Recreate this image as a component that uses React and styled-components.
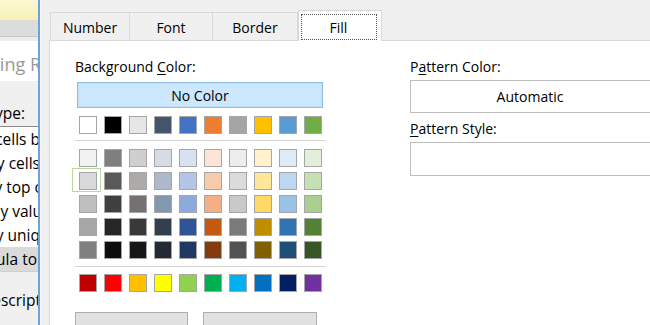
import React from "react";
import styled, { createGlobalStyle } from "styled-components";

const Global = createGlobalStyle`
  html, body { margin: 0; padding: 0; }
  body {
    width: 650px; height: 325px; overflow: hidden; background: #f0f0f0;
    font-family: "Open Sans", "Noto Sans", "Liberation Sans", sans-serif;
    font-size: 14px; color: #000;
  }
`;

const Page = styled.div`
  display: flex;
  height: 325px;
  width: 650px;
  overflow: hidden;
`;

/* ---------- background window strip ---------- */
const BackWindow = styled.div`
  width: 38px;
  flex: none;
  display: flex;
  flex-direction: column;
  background: #f0f0f0;
  overflow: hidden;
  & > * { flex-shrink: 0; }
`;
const YellowBar = styled.div`
  height: 20px;
  background: linear-gradient(#fcf8d2, #f7f0b8);
`;
const GrayBar = styled.div`
  height: 16px;
  background: #dcdcdc;
  border-bottom: 1px solid #c9c9c9;
`;
const LightBar = styled.div`
  height: 4px;
  background: #ececec;
`;
const Clip = styled.div`
  display: flex;
  flex-shrink: 0;
  justify-content: flex-end;
  align-items: center;
  white-space: nowrap;
  overflow: hidden;
  height: ${(p) => p.$h}px;
  background: ${(p) => p.$bg || "transparent"};
  color: ${(p) => p.$color || "#000"};
  font-size: ${(p) => p.$size || 15.5}px;
  & > span { margin-right: ${(p) => p.$cut || 0}px; }
`;
const ListBox = styled.div`
  display: flex;
  flex-direction: column;
  background: #fff;
  border-top: 1px solid #8a8a8a;
  border-bottom: 1px solid #cfcfcf;
`;
const WindowEdge = styled.div`
  width: 2px;
  flex: none;
  background: #6ea3d6;
`;

/* ---------- dialog ---------- */
const Dialog = styled.div`
  flex: none;
  width: 700px;
  display: flex;
  flex-direction: column;
  background: #f0f0f0;
  padding-left: 8px;
  border-left: 1px solid #f7f7f7;
`;
const TabStrip = styled.div`
  display: flex;
  flex: none;
  align-items: flex-end;
  height: 40px;
  padding-left: 1px;
`;
const Tab = styled.div`
  box-sizing: border-box;
  width: ${(p) => p.$w}px;
  height: ${(p) => (p.$active ? 31 : 28)}px;
  display: flex;
  align-items: center;
  justify-content: center;
  background: ${(p) => (p.$active ? "#fff" : "#f0f0f0")};
  border: 1px solid #d9d9d9;
  border-bottom: none;
  border-left: ${(p) => (p.$first || p.$active ? "1px solid #d9d9d9" : "none")};
  margin-bottom: ${(p) => (p.$active ? -1 : 0)}px;
  padding-top: ${(p) => (p.$active ? 0 : 1)}px;
  position: relative;
  z-index: ${(p) => (p.$active ? 2 : 1)};
`;
const FocusRect = styled.div`
  box-sizing: border-box;
  width: calc(100% - 6px);
  height: 26px;
  margin-right: 3px;
  margin-top: 2px;
  border: 1px dotted #555;
  display: flex;
  align-items: center;
  justify-content: center;
`;
const Panel = styled.div`
  flex: 1;
  min-height: 0;
  overflow: hidden;
  background: #fff;
  border-left: 1px solid #d9d9d9;
  border-top: 1px solid #d9d9d9;
  display: flex;
  align-items: flex-start;
  padding: 16px 0 0 25px;
  gap: 84px;
`;
const LeftCol = styled.div`
  width: 251px;
  flex: none;
  display: flex;
  flex-direction: column;
`;
const RightCol = styled.div`
  width: 260px;
  flex: none;
  display: flex;
  flex-direction: column;
`;
const Label = styled.div`
  height: 20px;
  line-height: 20px;
  margin-top: ${(p) => p.$mt || 0}px;
  white-space: nowrap;
  u { text-decoration-thickness: 1px; text-underline-offset: 2px; }
`;
const NoColorButton = styled.div`
  box-sizing: border-box;
  margin: 5px 3px 0 2px;
  height: 26px;
  background: #cce8ff;
  border: 1px solid #8fbfe8;
  box-shadow: inset 0 0 0 1px #c2def5;
  display: flex;
  align-items: center;
  justify-content: center;
`;
const SwatchRow = styled.div`
  display: flex;
  gap: 7px;
  padding-left: 4px;
  margin-top: ${(p) => p.$mt || 0}px;
`;
const Swatch = styled.div`
  box-sizing: border-box;
  width: 18px;
  height: 18px;
  background: ${(p) => p.$c};
  border: 1px solid #a6a6a6;
  position: relative;
  ${(p) =>
    p.$selected &&
    `&::after {
      content: "";
      position: absolute;
      left: -8px; top: -5px; right: -5px; bottom: -3px;
      border: 1px solid #b9d89f;
    }`}
`;
const ThemeGrid = styled.div`
  display: flex;
  flex-direction: column;
  gap: 5px;
  margin-top: 8px;
`;
const Separator = styled.div`
  height: 1px;
  background: #d4d4d4;
  margin-top: ${(p) => p.$mt}px;
`;
const ButtonRow = styled.div`
  display: flex;
  gap: 15px;
  margin-top: 20px;
`;
const GrayButton = styled.div`
  box-sizing: border-box;
  width: ${(p) => p.$w}px;
  height: 24px;
  background: #e1e1e1;
  border: 1px solid #adadad;
`;
const DropBox = styled.div`
  box-sizing: border-box;
  margin-top: 3px;
  height: ${(p) => p.$h}px;
  background: #fff;
  border: 1px solid #bdbdbd;
  display: flex;
  align-items: center;
  justify-content: center;
  padding-right: 20px;
`;

const baseRow = ["#ffffff", "#000000", "#e7e6e6", "#44546a", "#4472c4", "#ed7d31", "#a5a5a5", "#ffc000", "#5b9bd5", "#70ad47"];
const themeCols = [
  ["#f2f2f2", "#d9d9d9", "#bfbfbf", "#a6a6a6", "#808080"],
  ["#7f7f7f", "#595959", "#404040", "#262626", "#0d0d0d"],
  ["#d0cece", "#aeaaaa", "#757171", "#3a3838", "#171616"],
  ["#d6dce4", "#adb9ca", "#8497b0", "#333f4f", "#222b35"],
  ["#d9e1f2", "#b4c6e7", "#8ea9db", "#2f5597", "#1f3864"],
  ["#fce4d6", "#f8cbad", "#f4b084", "#c65911", "#833c0c"],
  ["#ededed", "#dbdbdb", "#c9c9c9", "#7b7b7b", "#525252"],
  ["#fff2cc", "#ffe699", "#ffd966", "#bf8f00", "#806000"],
  ["#ddebf7", "#bdd7ee", "#9bc2e6", "#2f75b5", "#1f4e78"],
  ["#e2efda", "#c6e0b4", "#a9d08e", "#548235", "#375623"],
];
const standard = ["#c00000", "#ff0000", "#ffc000", "#ffff00", "#92d050", "#00b050", "#00b0f0", "#0070c0", "#002060", "#7030a0"];

const listItems = [
  { t: "Format all cells b", cut: -2 },
  { t: "Format only cells", cut: -2 },
  { t: "Format only top c", cut: -4 },
  { t: "Format only valu", cut: -4 },
  { t: "Format only uniq", cut: -2 },
  { t: "Use a formula to", cut: 1, sel: true },
];

export default function App() {
  return (
    <Page>
      <Global />
      <BackWindow>
        <YellowBar />
        <GrayBar />
        <LightBar />
        <Clip $h={40} $bg="#fff" $color="#9a9a9a" $size={18} $cut={-3}>
          <span style={{ paddingTop: 6 }}>New Formatting R</span>
        </Clip>
        <Clip $h={45} $bg="#f0f0f0" $cut={13}>
          <span style={{ paddingTop: 18 }}>Select a Rule Type:</span>
        </Clip>
        <ListBox>
          {listItems.map((it) => (
            <Clip key={it.t} $h={24} $bg={it.sel ? "#dadada" : "#fff"} $cut={it.cut}>
              <span>{it.t}</span>
            </Clip>
          ))}
        </ListBox>
        <Clip $h={54} $bg="#f0f0f0" $cut={-3}>
          <span style={{ paddingTop: 2 }}>Edit the Rule Descript</span>
        </Clip>
      </BackWindow>
      <WindowEdge />
      <Dialog>
        <TabStrip>
          <Tab $w={80} $first>Number</Tab>
          <Tab $w={83}>Font</Tab>
          <Tab $w={85}>Border</Tab>
          <Tab $w={84} $active>
            <FocusRect>Fill</FocusRect>
          </Tab>
        </TabStrip>
        <Panel>
          <LeftCol>
            <Label>
              Background <u>C</u>olor:
            </Label>
            <NoColorButton>No Color</NoColorButton>
            <SwatchRow $mt={8}>
              {baseRow.map((c) => (
                <Swatch key={c} $c={c} />
              ))}
            </SwatchRow>
            <Separator $mt={6} />
            <ThemeGrid>
              {[0, 1, 2, 3, 4].map((r) => (
                <SwatchRow key={r}>
                  {themeCols.map((col, i) => (
                    <Swatch key={i} $c={col[r]} $selected={r === 1 && i === 0} />
                  ))}
                </SwatchRow>
              ))}
            </ThemeGrid>
            <Separator $mt={7} />
            <SwatchRow $mt={7}>
              {standard.map((c) => (
                <Swatch key={c} $c={c} />
              ))}
            </SwatchRow>
            <ButtonRow>
              <GrayButton $w={113} />
              <GrayButton $w={114} />
            </ButtonRow>
          </LeftCol>
          <RightCol>
            <Label>
              P<u>a</u>ttern Color:
            </Label>
            <DropBox $h={33}>Automatic</DropBox>
            <Label $mt={6}>
              <u>P</u>attern Style:
            </Label>
            <DropBox $h={34} />
          </RightCol>
        </Panel>
      </Dialog>
    </Page>
  );
}
